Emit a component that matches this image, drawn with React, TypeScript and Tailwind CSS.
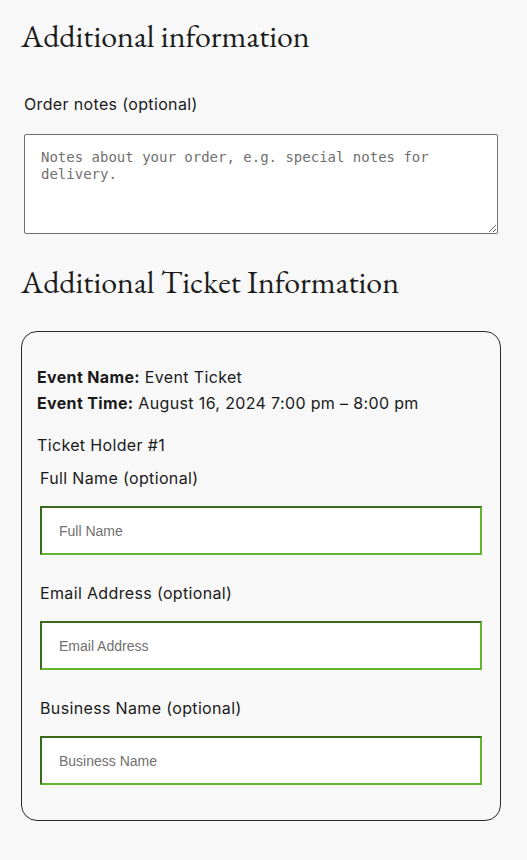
const serif = "font-['EB_Garamond','Liberation_Serif',serif]"

type FieldProps = {
  label: string
  placeholder: string
  first?: boolean
}

function TicketField({ label, placeholder, first }: FieldProps) {
  return (
    <div className={first ? 'mt-[9px]' : 'mt-[26px]'}>
      <label className="block text-[16px] leading-[24px] text-[#1a1a1a]">{label}</label>
      <input
        type="text"
        placeholder={placeholder}
        className="mt-[16px] block w-full h-[49px] bg-white border-2 border-t-[#3a6b1c] border-l-[#3a6b1c] border-b-[#63b52f] border-r-[#63b52f] pl-[17px] text-[14px] tracking-normal font-['Liberation_Sans',Arial,sans-serif] text-[#333] placeholder:text-[#707070] outline-none"
      />
    </div>
  )
}

export default function App() {
  return (
    <div className="min-h-[860px] bg-[#f8f8f8] pl-[21px] pr-[26px] pt-[16px] font-['Inter','Noto_Sans',sans-serif] tracking-[0.35px] text-[#1a1a1a]">
      {/* Additional information */}
      <h2 className={`${serif} text-[32px] leading-[40px] tracking-normal text-[#1c1c1c]`}>Additional information</h2>

      <div className="mt-[36px] pl-[3px]">
        <label className="block text-[16px] leading-[24px]">Order notes (optional)</label>
        <textarea
          placeholder="Notes about your order, e.g. special notes for delivery."
          className="mt-[18px] block w-[474px] h-[100px] bg-white border border-[#707070] rounded-[2px] px-[16px] pt-[14px] text-[14px] leading-[17px] tracking-normal font-['DejaVu_Sans_Mono',monospace] placeholder:text-[#707070] outline-none"
        />
      </div>

      <h2 className={`${serif} mt-[28px] text-[32px] leading-[40px] tracking-normal text-[#1c1c1c]`}>Additional Ticket Information</h2>

      {/* Ticket card */}
      <div className="mt-[29px] w-[480px] border border-[#2a2a2a] rounded-[16px] px-[15px] pt-[32px] pb-[35px]">
        <p className="text-[16px] leading-[26px]">
          <strong className="font-bold">Event Name:</strong> Event Ticket
        </p>
        <p className="text-[16px] leading-[26px]">
          <strong className="font-bold">Event Time:</strong> August 16, 2024 7:00 pm – 8:00 pm
        </p>
        <div className="mt-[17px] text-[16px] leading-[24px]">Ticket Holder #1</div>
        <div className="px-[3px]">
          <TicketField label="Full Name (optional)" placeholder="Full Name" first />
          <TicketField label="Email Address (optional)" placeholder="Email Address" />
          <TicketField label="Business Name (optional)" placeholder="Business Name" />
        </div>
      </div>
    </div>
  )
}
